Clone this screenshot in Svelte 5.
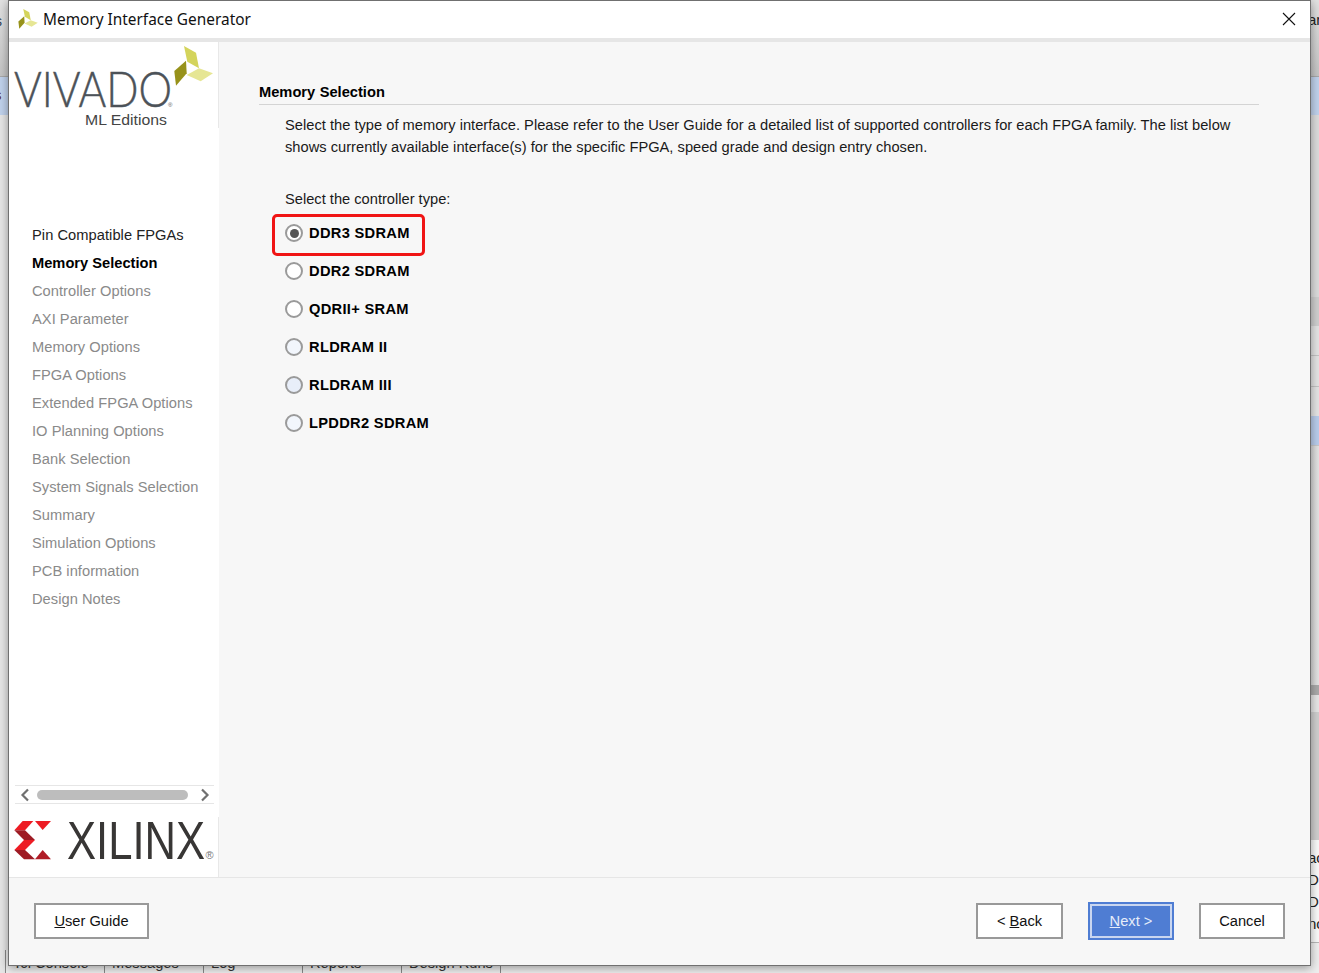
<script>
  const steps = ['Controller Options','AXI Parameter','Memory Options','FPGA Options','Extended FPGA Options','IO Planning Options','Bank Selection','System Signals Selection','Summary','Simulation Options','PCB information','Design Notes'];
  const radios = [
    { label: 'DDR3 SDRAM', fill: 'plain', on: true },
    { label: 'DDR2 SDRAM', fill: 'plain' },
    { label: 'QDRII+ SRAM', fill: 'plain' },
    { label: 'RLDRAM II', fill: 'tint1' },
    { label: 'RLDRAM III', fill: 'tint2' },
    { label: 'LPDDR2 SDRAM', fill: 'tint1' }
  ];
  const tabs = ['Tcl Console','Messages','Log','Reports','Design Runs'];
</script>

<div class="desktop">
  <div class="back-columns">
    <div class="strip left">
      <div class="band head"><span class="peek l1">s</span></div>
      <div class="band blue"><span class="peek l2">s</span></div>
    </div>
    <div class="strip right">
      <div class="band head"><span class="peek r1">ar</span></div>
      <div class="band blue"></div>
      <div class="band row-a"></div>
      <div class="band row-b"></div>
      <div class="band sash"></div>
      <div class="band row-c"></div>
      <div class="band row-d">
        <span class="peek">ac</span>
        <span class="peek">D</span>
        <span class="peek">D</span>
        <span class="peek">nc</span>
      </div>
    </div>
  </div>
  <div class="tabs">
    {#each tabs as t}<span class="tab">{t}</span>{/each}
  </div>

  <section class="dialog">
    <header class="titlebar">
      <svg class="app-icon" viewBox="174 46 39 40" aria-hidden="true">
        <polygon points="184,46 196,52.7 199,68.3 187.3,61.7" fill="#d4d45c"/>
        <polygon points="186.7,75 199,68.3 213,73.3 200.7,81.3" fill="#e6e694"/>
        <polygon points="174.3,71 186,60.7 186.7,73.3 176,85.7" fill="#97921a"/>
      </svg>
      <span class="title">Memory Interface Generator</span>
      <svg class="close" viewBox="0 0 14 14" aria-hidden="true"><path d="M1 1 13 13M13 1 1 13" stroke="#111" stroke-width="1.1" fill="none"/></svg>
    </header>

    <div class="body">
      <aside class="sidebar">
        <div class="brand-top">
          <svg width="209" height="86" viewBox="9 42 209 86" aria-hidden="true">
            <polygon points="184,46 196,52.7 199,68.3 187.3,61.7" fill="#d4d45c"/>
            <polygon points="186.7,75 199,68.3 213,73.3 200.7,81.3" fill="#e6e694"/>
            <polygon points="174.3,71 186,60.7 186.7,73.3 176,85.7" fill="#97921a"/>
            <text x="14" y="107" textLength="158" lengthAdjust="spacingAndGlyphs" class="vivado">VIVADO</text>
            <text x="168" y="107" class="reg">®</text>
            <text x="85" y="125" textLength="82" lengthAdjust="spacingAndGlyphs" class="ml">ML Editions</text>
          </svg>
        </div>
        <nav class="steps">
          <div class="step done">Pin Compatible FPGAs</div>
          <div class="step current">Memory Selection</div>
          {#each steps as s}<div class="step">{s}</div>{/each}
        </nav>
        <div class="scroller">
          <svg class="chev" viewBox="0 0 10 14" aria-hidden="true"><path d="M8 1.5 2.5 7 8 12.5" stroke="#707070" stroke-width="2.2" fill="none"/></svg>
          <div class="thumb"></div>
          <svg class="chev" viewBox="0 0 10 14" aria-hidden="true"><path d="M2 1.5 7.5 7 2 12.5" stroke="#707070" stroke-width="2.2" fill="none"/></svg>
        </div>
        <div class="brand-bottom">
          <svg width="210" height="73" viewBox="9 804 210 73" aria-hidden="true">
            <line x1="218.500" y1="817" x2="218.500" y2="877" stroke="#e8e8e8"/>
            <g transform="translate(10 815) scale(.3333)">
              <polygon points="13,46 38,18 70,18 45,46" fill="#ed1c24"/>
              <polygon points="13,46 45,46 75,75 42,75" fill="#9e1b24"/>
              <polygon points="13,105 42,75 75,75 45,105" fill="#ed1c24"/>
              <polygon points="13,105 45,105 75,133 42,133" fill="#9e1b24"/>
              <polygon points="75,18 123,18 98,45" fill="#ed1c24"/>
              <polygon points="75,133 98,105 123,133" fill="#b01c26"/>
            </g>
            <text x="67" y="859" textLength="138" lengthAdjust="spacingAndGlyphs" class="xilinx">XILINX</text>
            <text x="205.500" y="859" class="xreg">®</text>
          </svg>
        </div>
      </aside>

      <main class="content">
        <h2>Memory Selection</h2>
        <div class="inner">
          <p class="intro">Select the type of memory interface. Please refer to the User Guide for a detailed list of supported controllers for each FPGA family. The list below shows currently available interface(s) for the specific FPGA, speed grade and design entry chosen.</p>
          <p class="prompt">Select the controller type:</p>
          <div class="radios">
            <div class="callout"></div>
            {#each radios as r}
              <div class="radio-row">
                <span class="radio {r.fill}" class:on={r.on}></span>
                <span class="radio-label">{r.label}</span>
              </div>
            {/each}
          </div>
        </div>
      </main>
    </div>

    <footer class="footer">
      <button class="btn guide"><u>U</u>ser Guide</button>
      <div class="spacer"></div>
      <button class="btn back">&lt; <u>B</u>ack</button>
      <button class="btn next"><u>N</u>ext &gt;</button>
      <button class="btn cancel">Cancel</button>
    </footer>
  </section>
</div>

<style>
  :global(body) { margin: 0; background: #e4e4e4; }
  .desktop {
    position: relative;
    width: 1319px;
    height: 973px;
    overflow: hidden;
    background: #e6e6e6;
    font-family: "Liberation Sans", Arial, sans-serif;
    color: #000;
  }
  .back-columns { display: flex; justify-content: space-between; height: 950px; }
  .strip { width: 8px; display: flex; flex-direction: column; overflow: hidden; }
  .left { width: 9px; }
  .band { box-sizing: border-box; }
  .head { height: 77px; background: linear-gradient(#e2e2e2, #c4c4c4); border-bottom: 1px solid #a8a8a8; }
  .blue { height: 38px; background: #c0d2ec; }
  .peek { display: block; font-size: 15px; line-height: 22px; white-space: nowrap; color: #222; margin-left: -3px; }
  .l1 { padding-top: 10px; margin-left: -5px; font-size: 14px; color: #345; }
  .l2 { padding-top: 7px; margin-left: -6px; color: #632; }
  .r1 { padding-top: 9px; }
  .row-a { height: 211px; background: #e2e2e2; border-bottom: 29px solid #cfcfcf; background-image: linear-gradient(#dcdcdc, #dcdcdc); background-size: 100% 182px; background-repeat: no-repeat; }
  .row-b { height: 90px; background: linear-gradient(#e4e4e4 0 29px, #c4c4c4 29px 30px, #e4e4e4 30px 60px, #c4c4c4 60px 61px, #e4e4e4 61px); }
  .sash { height: 30px; background: #b9cdec; border-bottom: 1px solid #c8c8c8; }
  .row-c { height: 249px; background: linear-gradient(90deg, #d6d6d6, #e4e4e4); border-bottom: 10px solid #aaaaaa; }
  .row-d {
    height: 255px;
    padding-top: 152px;
    background: linear-gradient(#e6e6e6 0 17px, #cfcfcf 17px 145px, #fafafa 145px 247px, #b8b8b8 247px 248px, #f0f0f0 248px);
  }
  .tabs {
    display: flex;
    height: 23px;
    background: #eeeeee;
    box-sizing: border-box;
    border-left: 1px solid #888;
    margin-left: 5px;
  }
  .tab {
    display: block;
    width: 99px;
    padding-left: 7px;
    box-sizing: border-box;
    border-right: 1px solid #888;
    font-size: 14.67px;
    line-height: 26px;
    color: #333;
    white-space: nowrap;
  }

  .dialog {
    position: absolute;
    left: 8px;
    top: 0;
    width: 1303px;
    height: 966px;
    box-sizing: border-box;
    border: 1px solid #707070;
    background: #f7f7f7;
    box-shadow: 0 2px 9px rgba(0, 0, 0, .38);
    display: flex;
    flex-direction: column;
  }
  .titlebar {
    flex: none;
    height: 36px;
    background: #fff;
    border-bottom: 4px solid #e6e6e6;
    display: flex;
    align-items: center;
    padding: 0 14px 1px 9px;
  }
  .app-icon { width: 20px; height: 20px; margin-right: 5px; }
  .title { flex: 1; font-family: "Noto Sans", "Open Sans", sans-serif; font-size: 15.4px; color: #111; }
  .close { width: 14px; height: 14px; }

  .body { flex: 1; display: flex; min-height: 0; }
  .sidebar { width: 210px; flex: none; background: #fff; display: flex; flex-direction: column; }
  .brand-top { height: 179px; box-sizing: border-box; }
  .brand-top svg, .brand-bottom svg { display: block; }
  .brand-top svg { border-right: 1px solid #e8e8e8; }
  .vivado { font-family: Lato, "Open Sans", sans-serif; font-weight: 300; font-size: 50px; fill: #4c5258; stroke: #4c5258; stroke-width: .45px; }
  .reg { font-family: "Liberation Sans", sans-serif; font-size: 6px; fill: #555; }
  .ml { font-family: "Liberation Sans", sans-serif; font-size: 15.5px; fill: #444; }
  .xilinx { font-family: "Liberation Sans", sans-serif; font-size: 53px; fill: #383635; }
  .xreg { font-family: "Liberation Sans", sans-serif; font-size: 11px; fill: #777; }

  .steps { flex: 1; padding-left: 23px; }
  .step { height: 28px; line-height: 28px; font-size: 14.67px; letter-spacing: .04px; color: #8a8a8a; white-space: nowrap; }
  .step.done { color: #222; letter-spacing: .05px; }
  .step.current { color: #000; font-weight: 700; letter-spacing: 0; }

  .scroller {
    margin: 0 5px 0 6px;
    height: 19px;
    box-sizing: border-box;
    border-top: 1px solid #e6e6e6;
    border-bottom: 1px solid #e6e6e6;
    display: flex;
    align-items: center;
    padding: 0 4px 0 5px;
  }
  .chev { width: 10px; height: 14px; flex: none; }
  .thumb { flex: 1; height: 10px; margin: 0 12px 0 7px; background: #bdbdbd; border-radius: 5px; }
  .brand-bottom { height: 73px; }

  .content { flex: 1; padding: 41px 51px 0 40px; min-width: 0; }
  h2 {
    margin: 0;
    height: 21px;
    line-height: 19px;
    font-size: 14.67px;
    font-weight: 700;
    border-bottom: 1px solid #d4d4d4;
    word-spacing: .4px;
  }
  .inner { padding-left: 26px; }
  .intro { margin: 9px 0 0; font-size: 14.67px; line-height: 22px; letter-spacing: .012px; color: #1a1a1a; }
  .prompt { margin: 30px 0 0; font-size: 14.67px; line-height: 22px; color: #1a1a1a; }
  .radios { position: relative; margin-top: 4px; display: flex; flex-direction: column; }
  .radio-row { height: 38px; display: flex; align-items: center; gap: 6px; }
  .radio {
    position: relative;
    width: 18px;
    height: 18px;
    box-sizing: border-box;
    border: 2px solid #9a9a9a;
    border-radius: 50%;
    background: #fff;
    flex: none;
  }
  .tint1 { background: #f2f6fc; }
  .tint2 { background: #e8eef9; }
  .radio.on::after {
    content: "";
    position: absolute;
    inset: 2.5px;
    border-radius: 50%;
    background: #555;
  }
  .radio-label { font-size: 14.67px; font-weight: 700; letter-spacing: .3px; white-space: nowrap; }
  .callout {
    position: absolute;
    left: -13px;
    top: 0;
    width: 153px;
    height: 42px;
    box-sizing: border-box;
    border: 3px solid #f01414;
    border-radius: 5px;
    pointer-events: none;
  }

  .footer {
    flex: none;
    height: 88px;
    box-sizing: border-box;
    border-top: 1px solid #e6e6e6;
    background: #f7f7f7;
    display: flex;
    align-items: center;
    padding: 0 25px 2px 25px;
  }
  .spacer { flex: 1; }
  .btn {
    box-sizing: border-box;
    height: 36px;
    border: 2px solid #999;
    background: #fff;
    font: 14.67px "Liberation Sans", Arial, sans-serif;
    color: #111;
    padding: 0;
  }
  .guide { width: 115px; }
  .back { width: 87px; }
  .next {
    width: 86px;
    height: 38px;
    margin-left: 25px;
    border: 2px solid #4f7dd3;
    outline: 2px solid #c9d6f0;
    outline-offset: -4px;
    background: #4f7dd3;
    color: #e6edfa;
  }
  .cancel { width: 86px; margin-left: 25px; }
</style>
